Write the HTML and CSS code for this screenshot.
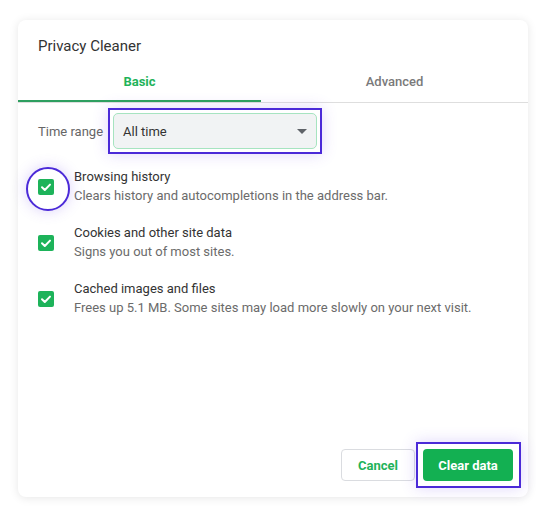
FILE: index.html
```html
<!DOCTYPE html>
<html lang="en">
<head>
<meta charset="utf-8">
<title>Privacy Cleaner</title>
<link rel="stylesheet" href="styles.css">
</head>
<body>
<div class="card">
  <div class="title">Privacy Cleaner</div>
  <div class="tabs">
    <div class="tab active">Basic</div>
    <div class="tab">Advanced</div>
  </div>
  <div class="range-row">
    <div class="range-label">Time range</div>
    <div class="highlight-box">
      <div class="select">
        <span class="select-value">All time</span>
        <span class="select-arrow"></span>
      </div>
    </div>
  </div>
  <div class="options">
    <div class="option">
      <div class="checkbox ringed">
        <svg viewBox="0 0 16 16" width="16" height="16"><path d="M4 8.2 L6.8 11 L12 5.6" fill="none" stroke="#fff" stroke-width="2" stroke-linecap="round" stroke-linejoin="round"/></svg>
      </div>
      <div class="option-text">
        <div class="option-title">Browsing history</div>
        <div class="option-desc">Clears history and autocompletions in the address bar.</div>
      </div>
    </div>
    <div class="option">
      <div class="checkbox">
        <svg viewBox="0 0 16 16" width="16" height="16"><path d="M4 8.2 L6.8 11 L12 5.6" fill="none" stroke="#fff" stroke-width="2" stroke-linecap="round" stroke-linejoin="round"/></svg>
      </div>
      <div class="option-text">
        <div class="option-title">Cookies and other site data</div>
        <div class="option-desc">Signs you out of most sites.</div>
      </div>
    </div>
    <div class="option">
      <div class="checkbox">
        <svg viewBox="0 0 16 16" width="16" height="16"><path d="M4 8.2 L6.8 11 L12 5.6" fill="none" stroke="#fff" stroke-width="2" stroke-linecap="round" stroke-linejoin="round"/></svg>
      </div>
      <div class="option-text">
        <div class="option-title">Cached images and files</div>
        <div class="option-desc">Frees up 5.1 MB. Some sites may load more slowly on your next visit.</div>
      </div>
    </div>
  </div>
  <div class="footer">
    <button class="btn btn-cancel">Cancel</button>
    <button class="btn btn-primary">Clear data</button>
  </div>
</div>
</body>
</html>
```

FILE: styles.css
```css
* { box-sizing: border-box; }

html, body {
  margin: 0;
  padding: 0;
  background: #ffffff;
  font-family: Roboto, "Liberation Sans", Arial, sans-serif;
}

body {
  padding: 20px 19px 19px 18px;
}

.card {
  width: 510px;
  height: 477px;
  background: #ffffff;
  border-radius: 8px;
  box-shadow: 0 1px 10px rgba(0, 0, 0, 0.10);
  display: flex;
  flex-direction: column;
}

.title {
  padding: 16px 0 0 20px;
  font-size: 15px;
  line-height: 20px;
  color: #333333;
}

.tabs {
  margin-top: 5px;
  display: grid;
  grid-template-columns: 243px 1fr;
  border-bottom: 1px solid #dedede;
}

.tab {
  position: relative;
  height: 41px;
  display: flex;
  align-items: center;
  justify-content: center;
  font-size: 13px;
  font-weight: 500;
  color: #7a7a7a;
}

.tab.active {
  color: #1fb35a;
  font-weight: 700;
}

.tab.active::after {
  content: "";
  position: absolute;
  left: 0;
  right: 0;
  bottom: 0;
  height: 2px;
  background: #2e9f60;
}

.range-row {
  margin-top: 5px;
  padding-left: 20px;
  display: flex;
  align-items: center;
}

.range-label {
  width: 70px;
  font-size: 13px;
  color: #666666;
}

.highlight-box {
  border: 2px solid #4b2ad8;
  padding: 3px;
  background: #ffffff;
  box-shadow: 0 0 14px rgba(110, 70, 235, 0.22);
}

.select {
  width: 204px;
  height: 36px;
  border: 1.5px solid #a6e4c0;
  border-radius: 5px;
  background: #f1f3f4;
  display: flex;
  align-items: center;
  justify-content: space-between;
  padding: 0 9px 0 9px;
}

.select-value {
  font-size: 13px;
  color: #333333;
}

.select-arrow {
  width: 0;
  height: 0;
  border-left: 5px solid transparent;
  border-right: 5px solid transparent;
  border-top: 5px solid #5f6368;
}

.options {
  margin-top: 13px;
  padding-left: 20px;
  display: flex;
  flex-direction: column;
  gap: 17px;
}

.option {
  display: flex;
  align-items: center;
  gap: 20px;
}

.checkbox {
  position: relative;
  width: 16px;
  height: 16px;
  flex: none;
  border-radius: 2px;
  background: #1db35a;
  margin-top: 0;
}

.checkbox svg {
  position: relative;
  display: block;
  z-index: 1;
}

.checkbox.ringed::before {
  content: "";
  position: absolute;
  left: -12px;
  top: -12px;
  width: 40px;
  height: 40px;
  border-radius: 50%;
  border: 2px solid #4b2ad8;
  background: #ffffff;
  box-shadow: 0 0 14px rgba(110, 70, 235, 0.25);
  z-index: 0;
}

.checkbox.ringed {
  background: transparent;
}

.checkbox.ringed::after {
  content: "";
  position: absolute;
  inset: 0;
  border-radius: 2px;
  background: #1db35a;
  z-index: 0;
}

.option-title {
  font-size: 13px;
  line-height: 19px;
  color: #333333;
}

.option-desc {
  font-size: 13px;
  line-height: 20px;
  color: #6b6b6b;
}

.footer {
  margin-top: auto;
  padding: 0 15px 16px 0;
  display: flex;
  justify-content: flex-end;
  gap: 8px;
}

.btn {
  height: 32px;
  border-radius: 4px;
  font-family: Roboto, "Liberation Sans", Arial, sans-serif;
  font-size: 13px;
  font-weight: 700;
  padding: 0;
  cursor: pointer;
}

.btn-cancel {
  width: 74px;
  background: #ffffff;
  border: 1px solid #dadce0;
  color: #1fb35a;
}

.btn-primary {
  position: relative;
  width: 90px;
  background: #13b052;
  border: none;
  color: #ffffff;
}

.btn-primary::after {
  content: "";
  position: absolute;
  left: -7px;
  top: -7px;
  right: -8px;
  bottom: -7px;
  border: 2px solid #4b2ad8;
  box-shadow: 0 0 14px rgba(110, 70, 235, 0.22);
  pointer-events: none;
}
```
